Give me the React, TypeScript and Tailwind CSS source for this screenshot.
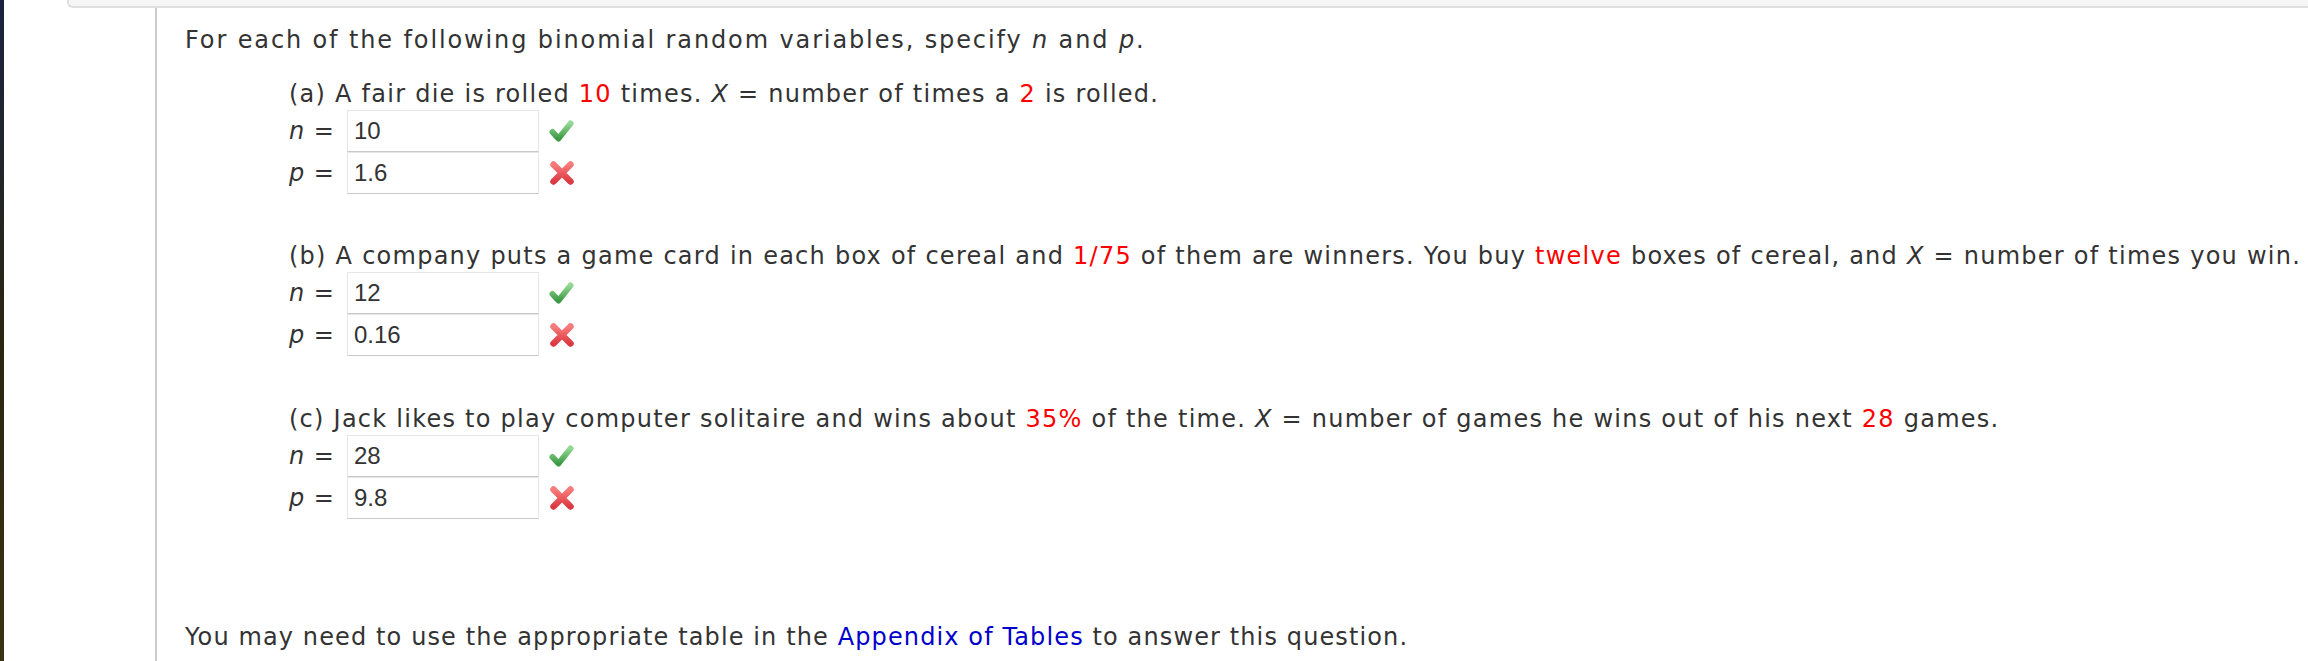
import React from 'react';

const font = { fontFamily: '"DejaVu Sans", Verdana, sans-serif' };

const CheckIcon: React.FC = () => (
  <svg width="25" height="24" viewBox="0 0 25 24" className="block">
    <defs>
      <linearGradient id="chk" x1="0" y1="0" x2="0" y2="1">
        <stop offset="0" stopColor="#94d894" />
        <stop offset="1" stopColor="#3d9a45" />
      </linearGradient>
    </defs>
    <path d="M3.5 13 L9.5 19.5 L21.5 4.5" fill="none" stroke="url(#chk)" strokeWidth="6" strokeLinecap="round" strokeLinejoin="round" />
  </svg>
);

const CrossIcon: React.FC = () => (
  <svg width="26" height="24" viewBox="0 0 26 24" className="block">
    <defs>
      <linearGradient id="crs" x1="0" y1="0" x2="0" y2="1">
        <stop offset="0" stopColor="#f87c7c" />
        <stop offset="1" stopColor="#dc3a42" />
      </linearGradient>
    </defs>
    <path d="M4.5 3.5 L21.5 20.5 M21.5 3.5 L4.5 20.5" fill="none" stroke="url(#crs)" strokeWidth="6.5" strokeLinecap="round" />
  </svg>
);

const Red: React.FC<{ children: React.ReactNode }> = ({ children }) => (
  <span className="text-[#ff0000]">{children}</span>
);

const Var: React.FC<{ children: React.ReactNode }> = ({ children }) => <i>{children}</i>;

interface AnswerRowProps {
  name: string;
  value: string;
  correct: boolean;
}

const AnswerRow: React.FC<AnswerRowProps> = ({ name, value, correct }) => (
  <div className="flex items-center h-[42px]">
    <span className="w-[58px] whitespace-pre tracking-[1px]">
      <Var>{name}</Var> =
    </span>
    <div
      className="w-[192px] h-[42px] bg-white border border-[#e6e6e6] border-b-[#c9c9c9] flex items-center pl-[6px] text-[24px] text-[#333]"
      style={{ fontFamily: '"Liberation Sans", Arial, sans-serif' }}
    >
      {value}
    </div>
    <div className="ml-[10px]">{correct ? <CheckIcon /> : <CrossIcon />}</div>
  </div>
);

interface PartProps {
  prompt: React.ReactNode;
  n: string;
  p: string;
  className?: string;
}

const Part: React.FC<PartProps> = ({ prompt, n, p, className }) => (
  <div className={`pl-[104px] ${className ?? ''}`}>
    <div className="leading-[32px] whitespace-nowrap tracking-[1.25px]">{prompt}</div>
    <AnswerRow name="n" value={n} correct />
    <AnswerRow name="p" value={p} correct={false} />
  </div>
);

export default function App() {
  return (
    <div className="w-[2308px] h-[661px] bg-white overflow-hidden flex text-[24px] text-[#333]" style={font}>
      <div className="w-[4px] h-full bg-gradient-to-b from-[#1a2240] via-[#2a2510] to-[#3a3212] shrink-0" />
      <div className="flex-1 flex flex-col">
        <div className="ml-[63px] h-[8px] bg-[#f6f6f6] border-b-2 border-l-2 border-[#dedede] rounded-bl-[6px] shrink-0" />
        <div className="flex flex-1">
          <div className="w-[151px] shrink-0" />
          <div className="flex-1 border-l-2 border-[#cccccc] pl-[28px] pt-[16px]">
            <div className="leading-[32px] whitespace-nowrap tracking-[1.88px]">
              For each of the following binomial random variables, specify <Var>n</Var> and <Var>p</Var>.
            </div>
            <Part
              className="mt-[22px]"
              prompt={
                <>
                  (a) A fair die is rolled <Red>10</Red> times. <Var>X</Var> = number of times a <Red>2</Red> is rolled.
                </>
              }
              n="10"
              p="1.6"
            />
            <Part
              className="mt-[46px]"
              prompt={
                <>
                  (b) A company puts a game card in each box of cereal and <Red>1/75</Red> of them are winners. You buy{' '}
                  <Red>twelve</Red> boxes of cereal, and <Var>X</Var> = number of times you win.
                </>
              }
              n="12"
              p="0.16"
            />
            <Part
              className="mt-[47px]"
              prompt={
                <>
                  (c) Jack likes to play computer solitaire and wins about <Red>35%</Red> of the time. <Var>X</Var> = number
                  of games he wins out of his next <Red>28</Red> games.
                </>
              }
              n="28"
              p="9.8"
            />
            <div className="mt-[102px] leading-[32px] whitespace-nowrap tracking-[1.12px]">
              You may need to use the appropriate table in the{' '}
              <a className="text-[#0000cc]">Appendix of Tables</a> to answer this question.
            </div>
          </div>
        </div>
      </div>
    </div>
  );
}
